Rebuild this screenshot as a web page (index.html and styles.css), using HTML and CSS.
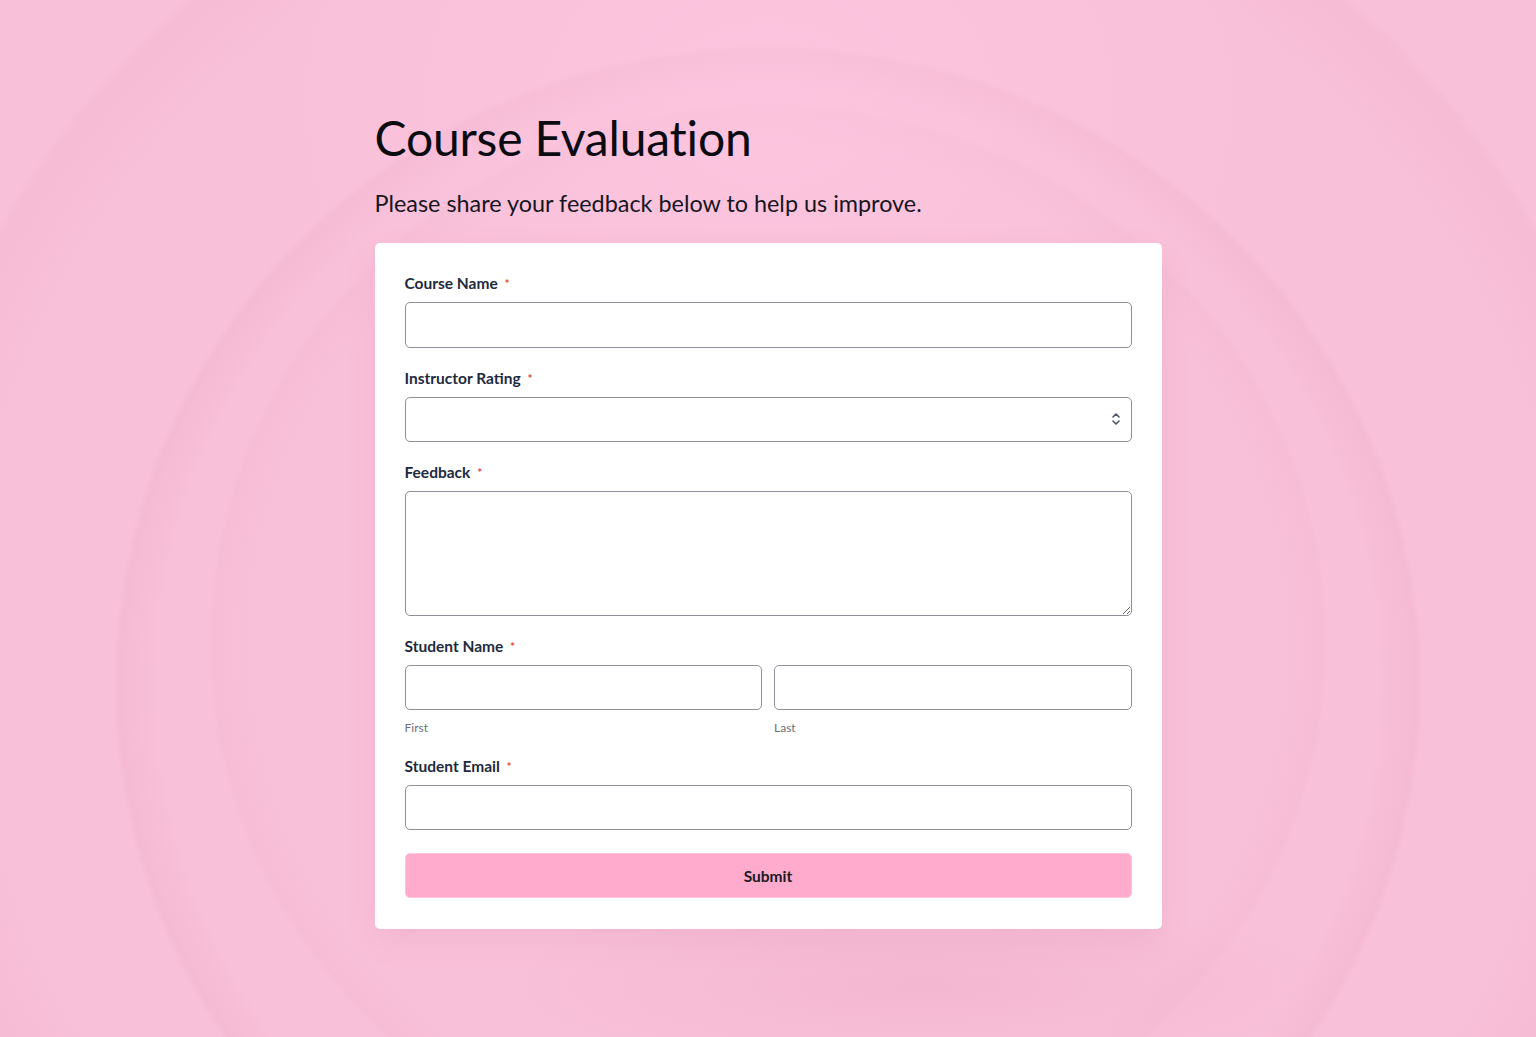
FILE: index.html
```html
<!DOCTYPE html>
<html lang="en">
<head>
    <meta charset="UTF-8">
    <meta name="viewport" content="width=device-width, initial-scale=1.0">
    <title>Course Evaluation</title>
    <link rel="stylesheet" href="styles.css">
</head>
<body>
    <div class="page">
        <h1 class="title">Course Evaluation</h1>
        <p class="intro">Please share your feedback below to help us improve.</p>

        <form class="card">
            <div class="field">
                <label class="label" for="course">Course Name <span class="req">*</span></label>
                <input class="input" id="course" type="text">
            </div>

            <div class="field">
                <label class="label" for="rating">Instructor Rating <span class="req">*</span></label>
                <div class="select-wrap">
                    <select class="input select" id="rating">
                        <option></option>
                        <option>1</option>
                        <option>2</option>
                        <option>3</option>
                        <option>4</option>
                        <option>5</option>
                    </select>
                    <svg class="chevrons" width="10" height="14" viewBox="0 0 10 14" fill="none" stroke="#4b5563" stroke-width="1.6" stroke-linecap="round" stroke-linejoin="round">
                        <path d="M2 5 L5 2 L8 5"/>
                        <path d="M2 9 L5 12 L8 9"/>
                    </svg>
                </div>
            </div>

            <div class="field">
                <label class="label" for="feedback">Feedback <span class="req">*</span></label>
                <textarea class="input textarea" id="feedback"></textarea>
            </div>

            <div class="field">
                <span class="label">Student Name <span class="req">*</span></span>
                <div class="name-row">
                    <div class="name-part">
                        <input class="input" type="text" aria-label="First">
                        <span class="sublabel">First</span>
                    </div>
                    <div class="name-part">
                        <input class="input" type="text" aria-label="Last">
                        <span class="sublabel">Last</span>
                    </div>
                </div>
            </div>

            <div class="field">
                <label class="label" for="email">Student Email <span class="req">*</span></label>
                <input class="input" id="email" type="email">
            </div>

            <button class="submit" type="button">Submit</button>
        </form>
    </div>
</body>
</html>
```

FILE: styles.css
```css
* {
    box-sizing: border-box;
}

html {
    background-color: #f9c0d9;
}

body {
    margin: 0;
    min-height: 100vh;
    font-family: 'Lato', 'Noto Sans', sans-serif;
    color: #111;
    background-color: #f9c0d9;
    /* soft swirl rings behind the form */
    background-image:
        radial-gradient(ellipse 420px 90px at 60% 95%, rgba(225, 150, 185, 0.22) 0%, transparent 100%),
        radial-gradient(ellipse 520px 420px at 50% 10%, rgba(255, 200, 226, 0.55) 0%, transparent 100%),
        radial-gradient(ellipse 655px 640px at 50% 66%, transparent 0%, transparent 93%, rgba(222, 150, 185, 0.16) 99%, transparent 100%),
        radial-gradient(ellipse 560px 540px at 50% 62%, transparent 0%, transparent 92%, rgba(222, 150, 185, 0.08) 99%, transparent 100%),
        radial-gradient(ellipse 880px 860px at 50% 62%, transparent 0%, transparent 90%, rgba(222, 150, 185, 0.12) 99%, transparent 100%);
    display: flex;
    justify-content: center;
}

.page {
    width: 787px;
    padding-top: 104px;
    padding-bottom: 60px;
}

.title {
    margin: 0;
    font-size: 48px;
    font-weight: 400;
    line-height: 68px;
    color: #0b0b12;
    letter-spacing: -0.2px;
}

.intro {
    margin: 15px 0 24px;
    font-size: 23.4px;
    line-height: 32px;
    color: #16161e;
}

.card {
    background: #fff;
    border-radius: 5px;
    padding: 30px 30px 31px;
    display: flex;
    flex-direction: column;
    gap: 20px;
    box-shadow: 0 12px 30px rgba(200, 110, 150, 0.12);
}

.field {
    display: flex;
    flex-direction: column;
}

.label {
    font-size: 15.5px;
    font-weight: 700;
    line-height: 20px;
    height: 20px;
    color: #1e2a3e;
    margin-bottom: 9px;
}

.req {
    color: #e0483e;
    font-size: 12px;
    line-height: 0;
    vertical-align: 1px;
    margin-left: 3px;
}

.input {
    display: block;
    width: 100%;
    height: 45.5px;
    border: 1px solid #8d9098;
    border-radius: 5px;
    background: #fff;
    font-family: inherit;
    font-size: 15px;
    padding: 0 12px;
    margin: 0;
}

.select-wrap {
    position: relative;
}

.select {
    appearance: none;
    -webkit-appearance: none;
}

.chevrons {
    position: absolute;
    right: 11px;
    top: 15px;
    pointer-events: none;
}

.textarea {
    height: 124.5px;
    resize: vertical;
    padding: 10px 12px;
}

.name-row {
    display: flex;
    gap: 12px;
}

.name-part {
    flex: 1;
    display: flex;
    flex-direction: column;
}

.sublabel {
    margin-top: 9.5px;
    font-size: 12px;
    line-height: 16px;
    color: #6b6f78;
}

.submit {
    margin-top: 3px;
    height: 45px;
    border: 1px solid #ffc3dc;
    border-radius: 5px;
    background: #ffabcd;
    font-family: inherit;
    font-size: 15.5px;
    font-weight: 700;
    color: #1a1a22;
    cursor: pointer;
}
```
